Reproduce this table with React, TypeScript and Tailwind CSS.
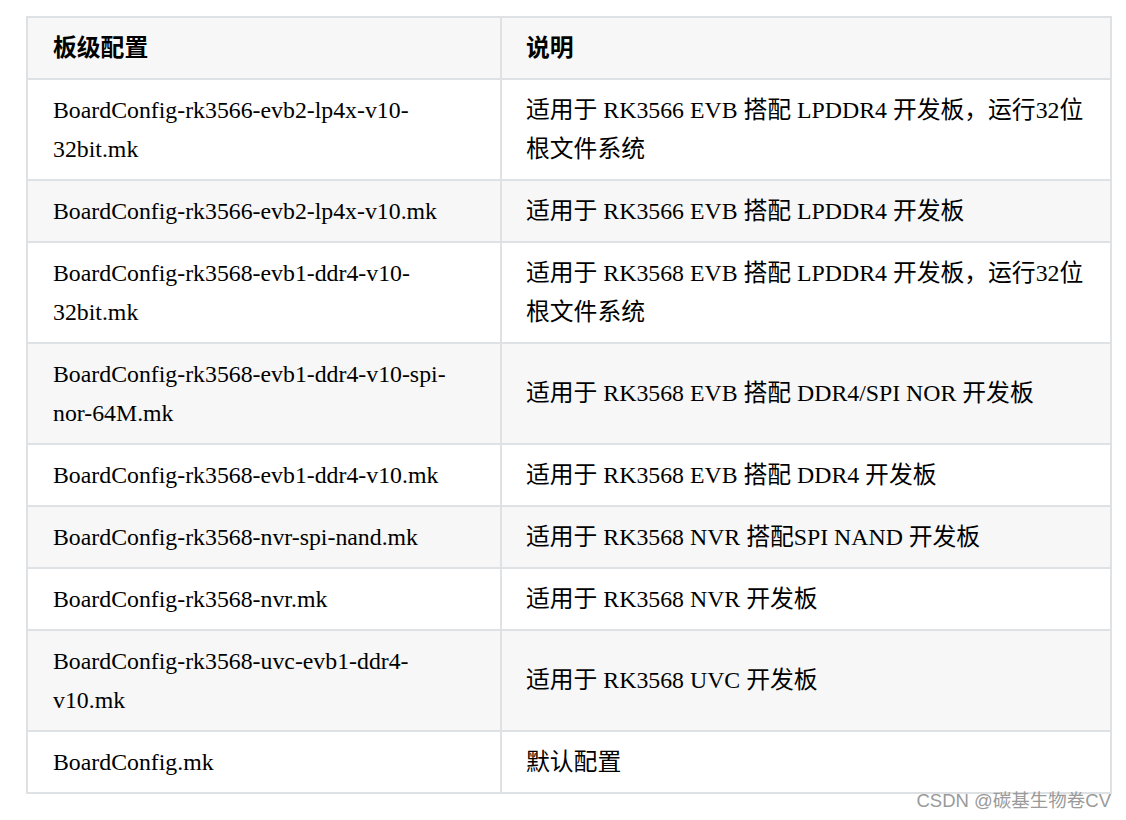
import React from "react";

const rows: [string[], string[]][] = [
  [["BoardConfig-rk3566-evb2-lp4x-v10-", "32bit.mk"], ["适用于 RK3566 EVB 搭配 LPDDR4 开发板，运行32位", "根文件系统"]],
  [["BoardConfig-rk3566-evb2-lp4x-v10.mk"], ["适用于 RK3566 EVB 搭配 LPDDR4 开发板"]],
  [["BoardConfig-rk3568-evb1-ddr4-v10-", "32bit.mk"], ["适用于 RK3568 EVB 搭配 LPDDR4 开发板，运行32位", "根文件系统"]],
  [["BoardConfig-rk3568-evb1-ddr4-v10-spi-", "nor-64M.mk"], ["适用于 RK3568 EVB 搭配 DDR4/SPI NOR 开发板"]],
  [["BoardConfig-rk3568-evb1-ddr4-v10.mk"], ["适用于 RK3568 EVB 搭配 DDR4 开发板"]],
  [["BoardConfig-rk3568-nvr-spi-nand.mk"], ["适用于 RK3568 NVR 搭配SPI NAND 开发板"]],
  [["BoardConfig-rk3568-nvr.mk"], ["适用于 RK3568 NVR 开发板"]],
  [["BoardConfig-rk3568-uvc-evb1-ddr4-", "v10.mk"], ["适用于 RK3568 UVC 开发板"]],
  [["BoardConfig.mk"], ["默认配置"]],
];

function Lines({ lines }: { lines: string[] }) {
  return (
    <>
      {lines.map((l, i) => (
        <div key={i} className="whitespace-nowrap">{l}</div>
      ))}
    </>
  );
}

export default function App() {
  return (
    <div
      className="relative w-[1126px] h-[820px] bg-white text-black"
      style={{ fontFamily: '"Liberation Serif", "Noto Sans CJK SC", serif' }}
    >
      <div className="pt-[16px] pl-[26px]">
        <table className="border-collapse w-[1086px] text-[23.8px] leading-[39px]">
          <thead>
            <tr className="bg-[#f7f7f7]">
              <th className="border-2 border-[#dfe2e5] w-[474px] h-[62px] pl-[25px] pr-4 text-left font-bold align-middle">板级配置</th>
              <th className="border-2 border-[#dfe2e5] h-[62px] pl-[24px] pr-4 text-left font-bold align-middle">说明</th>
            </tr>
          </thead>
          <tbody>
            {rows.map(([a, b], i) => (
              <tr key={i} className={i % 2 === 1 ? "bg-[#f7f7f7]" : "bg-white"}>
                <td className="border-2 border-[#dfe2e5] pl-[25px] pr-4 py-[10.5px] align-middle">
                  <Lines lines={a} />
                </td>
                <td className="border-2 border-[#dfe2e5] pl-[24px] pr-4 py-[10.5px] align-middle">
                  <Lines lines={b} />
                </td>
              </tr>
            ))}
          </tbody>
        </table>
      </div>
      <div
        className="absolute right-[15px] top-[789px] text-[18.5px] leading-[24px] text-[#9a9a9a]"
        style={{ fontFamily: '"Liberation Sans", "Noto Sans CJK SC", sans-serif' }}
      >
        CSDN @碳基生物卷CV
      </div>
    </div>
  );
}
